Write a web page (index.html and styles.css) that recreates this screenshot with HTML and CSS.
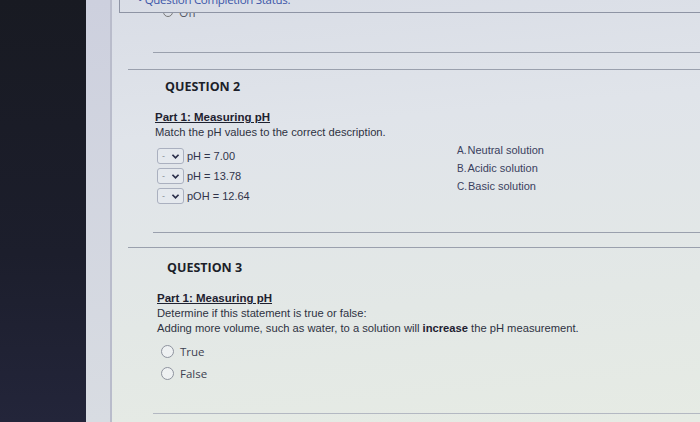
FILE: index.html
```html
<!DOCTYPE html>
<html>
<head>
<meta charset="utf-8">
<link rel="stylesheet" href="styles.css">
</head>
<body>
<div class="screen">
  <div class="bezel"></div>
  <div class="rail"></div>
  <div class="main">
    <div class="status-box">
      <div class="status-text">&#8226; Question Completion Status:</div>
    </div>
    <div class="off-row"><span class="off-radio"></span><span>Off</span></div>
    <div class="rule rule-short r1"></div>
    <div class="rule rule-long r2"></div>

    <section class="question q2">
      <h2 class="q-title">QUESTION 2</h2>
      <div class="part">Part 1: Measuring pH</div>
      <p class="line">Match the pH values to the correct description.</p>
      <div class="match">
        <div class="left-col">
          <div class="sel-row"><span class="sel"><span class="dash">-</span><svg class="chev" viewBox="0 0 10 8" width="9" height="7"><path d="M1.5 2 L5 5.5 L8.5 2" fill="none" stroke="#2b2f4a" stroke-width="2"/></svg></span><span>pH = 7.00</span></div>
          <div class="sel-row"><span class="sel"><span class="dash">-</span><svg class="chev" viewBox="0 0 10 8" width="9" height="7"><path d="M1.5 2 L5 5.5 L8.5 2" fill="none" stroke="#2b2f4a" stroke-width="2"/></svg></span><span>pH = 13.78</span></div>
          <div class="sel-row"><span class="sel"><span class="dash">-</span><svg class="chev" viewBox="0 0 10 8" width="9" height="7"><path d="M1.5 2 L5 5.5 L8.5 2" fill="none" stroke="#2b2f4a" stroke-width="2"/></svg></span><span>pOH = 12.64</span></div>
        </div>
        <div class="right-col">
          <div class="opt"><span class="letter">A.</span>Neutral solution</div>
          <div class="opt"><span class="letter">B.</span>Acidic solution</div>
          <div class="opt"><span class="letter">C.</span>Basic solution</div>
        </div>
      </div>
    </section>

    <div class="rule rule-short r3"></div>
    <div class="rule rule-long r4"></div>

    <section class="question q3">
      <h2 class="q-title">QUESTION 3</h2>
      <div class="part">Part 1: Measuring pH</div>
      <p class="line">Determine if this statement is true or false:</p>
      <p class="line">Adding more volume, such as water, to a solution will <b>increase</b> the pH measurement.</p>
      <div class="radio-row first"><span class="radio"></span><span>True</span></div>
      <div class="radio-row"><span class="radio"></span><span>False</span></div>
    </section>

    <div class="rule rule-short r5"></div>
  </div>
</div>
</body>
</html>
```

FILE: styles.css
```css
html, body {
  margin: 0;
  padding: 0;
  width: 700px;
  height: 422px;
  overflow: hidden;
}
body {
  font-family: "Liberation Sans", Arial, sans-serif;
  color: #2b2f3e;
}
.screen {
  display: flex;
  width: 700px;
  height: 422px;
  background: #15161d;
}
.bezel {
  width: 86px;
  flex: none;
  background: linear-gradient(180deg, #181a22 0%, #1c1e2c 60%, #23253a 100%);
}
.rail {
  width: 24px;
  flex: none;
  background: linear-gradient(180deg, #cdd0de 0%, #d8dce2 100%);
  border-right: 2px solid #b9bccb;
}
.main {
  flex: 1;
  display: flex;
  flex-direction: column;
  background: linear-gradient(175deg, #d9dde6 0%, #e0e4ea 30%, #e3e8e6 70%, #e6ebe4 100%);
  overflow: hidden;
}
.status-box {
  height: 12px;
  margin-left: 7px;
  border-left: 1px solid #8e94a4;
  border-bottom: 1px solid #8e94a4;
  overflow: hidden;
  flex: none;
}
.status-text {
  margin-top: -7px;
  margin-left: 18px;
  font-family: "Open Sans", sans-serif;
  font-size: 11.5px;
  letter-spacing: -0.3px;
  line-height: 14px;
  color: #3b55a8;
}
.off-row {
  height: 4px;
  overflow: hidden;
  margin-left: 51px;
  display: flex;
  gap: 6px;
  font-family: "Open Sans", sans-serif;
  font-size: 12px;
  line-height: 10px;
  color: #555a66;
  flex: none;
}
.off-row span:last-child {
  margin-top: -5px;
}
.off-radio {
  width: 8px;
  height: 8px;
  border: 1px solid #777;
  border-radius: 50%;
  margin-top: -6px;
}
.rule {
  height: 0;
  border-top: 1.5px solid #9aa0ad;
  flex: none;
}
.rule-short { margin-left: 41px; }
.rule-long { margin-left: 16px; }
.r1 { margin-top: 35px; }
.r2 { margin-top: 16px; }
.r3 { margin-top: 28px; }
.r4 { margin-top: 14px; }
.r5 { margin-top: 32px; border-top-color: #b3b8c2; }

.question {
  flex: none;
}
.q2 { margin-left: 43px; }
.q3 { margin-left: 45px; }
.q-title {
  margin: 0;
  font-family: "Open Sans", sans-serif;
  font-weight: 700;
  font-size: 12.5px;
  line-height: 16px;
  color: #1c1f2a;
  margin-left: 10px;
}
.q2 .q-title { margin-top: 9px; }
.q3 .q-title { margin-top: 12px; }
.part {
  margin-top: 15px;
  font-size: 11.5px;
  font-weight: 700;
  text-decoration: underline;
  line-height: 15px;
  color: #1e2130;
}
.line {
  margin: 0;
  font-size: 11.2px;
  line-height: 15px;
  color: #2e3242;
}
.line b { color: #1e2130; }
.match {
  display: flex;
  margin-top: 8px;
}
.left-col {
  display: flex;
  flex-direction: column;
  gap: 4px;
  width: 300px;
  margin-left: 2px;
}
.sel-row {
  display: flex;
  align-items: center;
  gap: 3px;
  font-size: 11px;
  color: #30344a;
  height: 16px;
}
.sel {
  width: 27px;
  height: 16px;
  box-sizing: border-box;
  border: 1px solid #aab0bf;
  border-radius: 3px;
  background: #e5e9ee;
  display: flex;
  align-items: center;
  padding-left: 4px;
  gap: 6px;
}
.dash {
  color: #8a909c;
  font-size: 9px;
  line-height: 9px;
}
.chev { display: block; }
.right-col {
  display: flex;
  flex-direction: column;
  gap: 3px;
  margin-top: -5px;
}
.opt {
  font-size: 11px;
  line-height: 15px;
  color: #3a3f5e;
}
.letter {
  font-size: 10px;
  margin-right: 1px;
}
.radio-row {
  display: flex;
  align-items: center;
  gap: 6px;
  margin-left: 4px;
  font-family: "Open Sans", sans-serif;
  font-size: 11.5px;
  color: #3c4150;
  height: 16px;
}
.radio-row.first { margin-top: 7px; }
.radio-row + .radio-row { margin-top: 6px; }
.radio {
  width: 11px;
  height: 11px;
  border: 1px solid #8e939e;
  border-radius: 50%;
  background: #eef1f2;
}
```
